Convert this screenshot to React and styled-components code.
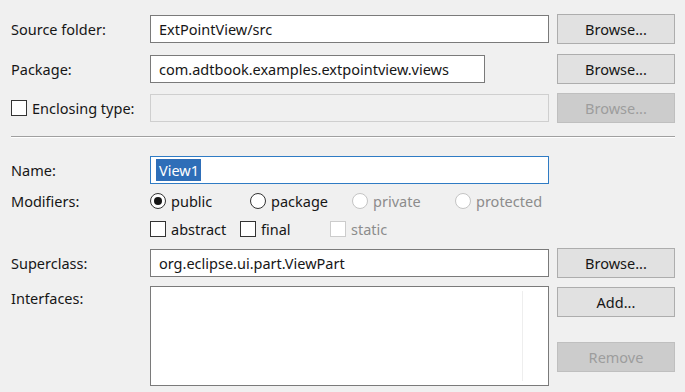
import React from "react";
import styled, { createGlobalStyle, css } from "styled-components";

const Global = createGlobalStyle`
  html, body { margin: 0; padding: 0; background: #f0f0f0; }
  body { font-family: "Noto Sans", "Open Sans", sans-serif; font-size: 14.5px; color: #161616; }
`;

const Page = styled.div`
  width: 685px;
  height: 392px;
  box-sizing: border-box;
  padding: 14px 10px 0 11px;
  background: #f0f0f0;
  overflow: hidden;
`;

const Row = styled.div`
  display: grid;
  grid-template-columns: 131px 399px 118px;
  column-gap: 8px;
  align-items: ${(p) => (p.$top ? "start" : "center")};
  height: ${(p) => p.$h || 30}px;
  margin-top: ${(p) => p.$mt || 0}px;
`;

const Label = styled.div`
  display: flex;
  align-items: center;
  gap: 5px;
  white-space: nowrap;
  padding-top: ${(p) => p.$pt || 0}px;
`;

const TextField = styled.div`
  box-sizing: border-box;
  height: 28px;
  display: flex;
  align-items: center;
  padding: 0 8px;
  background: ${(p) => (p.$disabled ? "#f0f0f0" : "#ffffff")};
  border: 1px solid ${(p) => (p.$focused ? "#2f7bc4" : p.$disabled ? "#cfcfcf" : "#7a7a7a")};
  white-space: nowrap;
  overflow: hidden;
  ${(p) => p.$w && css`width: ${p.$w}px;`}
`;

const Selected = styled.span`
  background: #2e6eb8;
  color: #ffffff;
  margin-left: -3px;
  padding: 1px 2px 1px 3px;
`;

const Button = styled.div`
  box-sizing: border-box;
  height: 30px;
  display: flex;
  align-items: center;
  justify-content: center;
  background: ${(p) => (p.$disabled ? "#cccccc" : "#e1e1e1")};
  border: 1px solid ${(p) => (p.$disabled ? "#bfbfbf" : "#adadad")};
  color: ${(p) => (p.$disabled ? "#9d9d9d" : "#161616")};
`;

const Separator = styled.div`
  margin-top: 13px;
  width: 664px;
  height: 1px;
  background: #a0a0a0;
  border-bottom: 1px solid #ffffff;
`;

const Box = styled.span`
  box-sizing: border-box;
  width: 16px;
  height: 16px;
  flex: none;
  background: #ffffff;
  border: 1px solid ${(p) => (p.$disabled ? "#cccccc" : "#333333")};
`;

const RadioCircle = styled.span`
  box-sizing: border-box;
  width: 16px;
  height: 16px;
  flex: none;
  border-radius: 50%;
  background: #ffffff;
  border: 1px solid ${(p) => (p.$disabled ? "#c4c4c4" : "#333333")};
  display: flex;
  align-items: center;
  justify-content: center;
  &::after {
    content: "";
    display: ${(p) => (p.$checked ? "block" : "none")};
    width: 8px;
    height: 8px;
    border-radius: 50%;
    background: #161616;
  }
`;

const Options = styled.div`
  display: flex;
  align-items: center;
  grid-column: 2 / 4;
`;

const Option = styled.div`
  display: flex;
  align-items: center;
  gap: 5px;
  width: ${(p) => p.$w}px;
  color: ${(p) => (p.$disabled ? "#8c8c8c" : "inherit")};
  white-space: nowrap;
`;

const List = styled.div`
  box-sizing: border-box;
  height: 100px;
  background: #ffffff;
  border: 1px solid #7a7a7a;
  display: flex;
  justify-content: flex-end;
  padding: 4px 0;
`;

const ListEdge = styled.div`
  width: 25px;
  border-left: 1px solid #eeeeee;
`;

const ButtonColumn = styled.div`
  display: flex;
  flex-direction: column;
  gap: 25px;
  padding-top: 1px;
`;

export default function App() {
  return (
    <Page>
      <Global />
      <Row>
        <Label>Source folder:</Label>
        <TextField>ExtPointView/src</TextField>
        <Button>Browse...</Button>
      </Row>
      <Row $mt={10}>
        <Label>Package:</Label>
        <TextField $w={335}>com.adtbook.examples.extpointview.views</TextField>
        <Button>Browse...</Button>
      </Row>
      <Row $mt={9}>
        <Label>
          <Box />
          Enclosing type:
        </Label>
        <TextField $disabled />
        <Button $disabled>Browse...</Button>
      </Row>
      <Separator />
      <Row $mt={18} $h={28}>
        <Label>Name:</Label>
        <TextField $focused>
          <Selected>View1</Selected>
        </TextField>
        <div />
      </Row>
      <Row $mt={7} $h={20}>
        <Label>Modifiers:</Label>
        <Options>
          <Option $w={100}>
            <RadioCircle $checked />
            public
          </Option>
          <Option $w={102}>
            <RadioCircle />
            package
          </Option>
          <Option $w={103} $disabled>
            <RadioCircle $disabled />
            private
          </Option>
          <Option $w={100} $disabled>
            <RadioCircle $disabled />
            protected
          </Option>
        </Options>
      </Row>
      <Row $mt={8} $h={20}>
        <div />
        <Options>
          <Option $w={90}>
            <Box />
            abstract
          </Option>
          <Option $w={90}>
            <Box />
            final
          </Option>
          <Option $w={90} $disabled>
            <Box $disabled />
            static
          </Option>
        </Options>
      </Row>
      <Row $mt={9}>
        <Label>Superclass:</Label>
        <TextField>org.eclipse.ui.part.ViewPart</TextField>
        <Button>Browse...</Button>
      </Row>
      <Row $mt={8} $h={100} $top>
        <Label $pt={2}>Interfaces:</Label>
        <List>
          <ListEdge />
        </List>
        <ButtonColumn>
          <Button>Add...</Button>
          <Button $disabled>Remove</Button>
        </ButtonColumn>
      </Row>
    </Page>
  );
}
